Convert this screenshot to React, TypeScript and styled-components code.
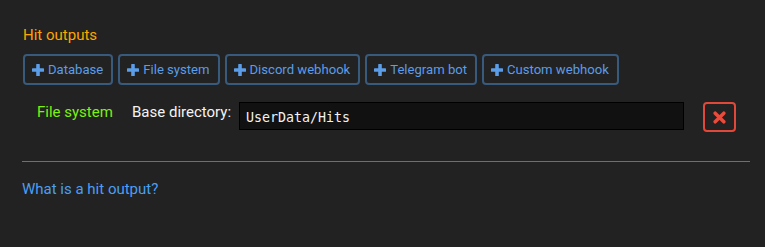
import React from "react";
import styled, { createGlobalStyle } from "styled-components";

const GlobalStyle = createGlobalStyle`
  html, body {
    margin: 0;
    background: #222222;
    font-family: Roboto, "Liberation Sans", sans-serif;
  }
`;

const Page = styled.div`
  padding: 26px 15px 40px 22px;
  min-height: 181px;
  background: #222222;
`;

const Title = styled.div`
  color: #ffa500;
  font-size: 15px;
  line-height: 18px;
  padding-left: 1px;
`;

const ButtonRow = styled.div`
  display: flex;
  gap: 5px;
  margin-top: 10px;
  padding-left: 1px;
`;

const AddButton = styled.button`
  display: flex;
  align-items: center;
  gap: 4px;
  height: 31px;
  padding: 0 8px 0 7px;
  background: transparent;
  border: 2px solid #385a7c;
  border-radius: 4px;
  color: #5b9de8;
  font-family: Roboto, "Liberation Sans", sans-serif;
  font-size: 13.1px;
  cursor: pointer;
`;

const OutputRow = styled.div`
  display: flex;
  align-items: flex-start;
  margin-top: 17px;
  padding-left: 15px;
`;

const OutputName = styled.div`
  color: #7cf012;
  font-size: 15px;
  line-height: 18px;
  padding-top: 1px;
  width: 95px;
`;

const FieldLabel = styled.div`
  color: #f4f4f4;
  font-size: 15px;
  line-height: 18px;
  padding-top: 1px;
  width: 107px;
`;

const TextInput = styled.input`
  box-sizing: border-box;
  width: 445px;
  height: 28px;
  padding: 2px 6px 0;
  background: #111111;
  border: 1px solid #000000;
  color: #f2f2f2;
  font-family: "DejaVu Sans Mono", "Liberation Mono", monospace;
  font-size: 13.3px;
  outline: none;
`;

const DeleteButton = styled.button`
  display: flex;
  align-items: center;
  justify-content: center;
  box-sizing: border-box;
  width: 33px;
  height: 30px;
  margin-left: 19px;
  padding: 0;
  background: transparent;
  border: 2px solid #e0483a;
  border-radius: 4px;
  color: #e84c3d;
  cursor: pointer;
`;

const Divider = styled.hr`
  margin: 29px 0 0;
  border: none;
  border-top: 1px solid #6f6f6f;
`;

const HelpLink = styled.a`
  display: block;
  margin-top: 18px;
  color: #4a9ff2;
  font-size: 15px;
  line-height: 18px;
  text-decoration: none;
  cursor: pointer;
`;

const PlusIcon = () => (
  <svg width="12" height="12" viewBox="0 0 12 12" fill="currentColor">
    <rect x="4.2" y="0" width="3.6" height="12" rx="0.6" />
    <rect x="0" y="4.2" width="12" height="3.6" rx="0.6" />
  </svg>
);

const CrossIcon = () => (
  <svg width="13" height="13" viewBox="0 0 12 12">
    <path
      d="M2 2 L10 10 M10 2 L2 10"
      stroke="currentColor"
      strokeWidth="3.2"
      strokeLinecap="round"
    />
  </svg>
);

const outputTypes = [
  "Database",
  "File system",
  "Discord webhook",
  "Telegram bot",
  "Custom webhook",
];

export default function App() {
  return (
    <Page>
      <GlobalStyle />
      <Title>Hit outputs</Title>
      <ButtonRow>
        {outputTypes.map((name) => (
          <AddButton key={name}>
            <PlusIcon />
            {name}
          </AddButton>
        ))}
      </ButtonRow>
      <OutputRow>
        <OutputName>File system</OutputName>
        <FieldLabel>Base directory:</FieldLabel>
        <TextInput defaultValue="UserData/Hits" />
        <DeleteButton aria-label="remove">
          <CrossIcon />
        </DeleteButton>
      </OutputRow>
      <Divider />
      <HelpLink>What is a hit output?</HelpLink>
    </Page>
  );
}
